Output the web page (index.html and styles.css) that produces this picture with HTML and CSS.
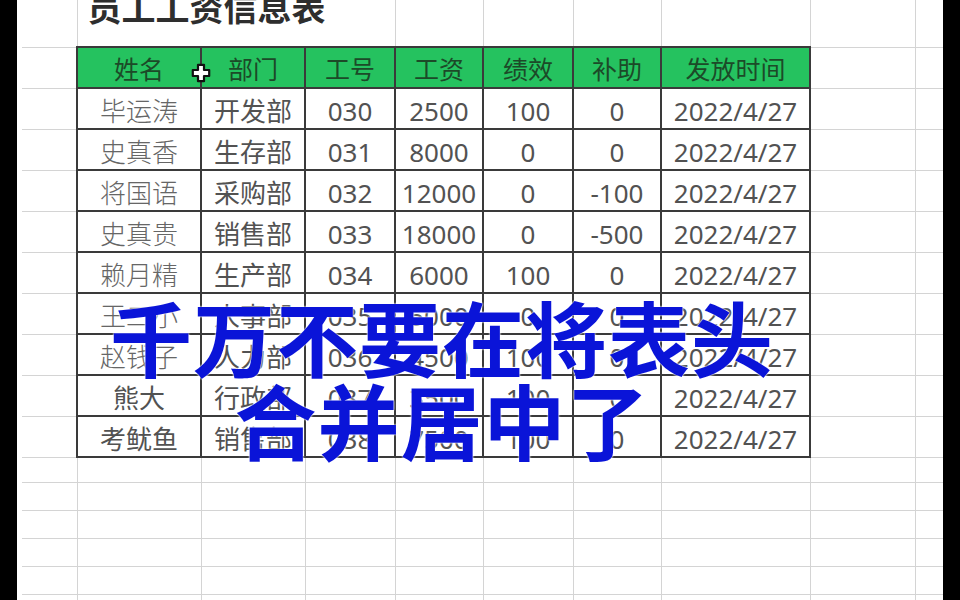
FILE: index.html
```html
<!DOCTYPE html>
<html lang="zh">
<head>
<meta charset="utf-8">
<title>员工工资信息表</title>
<link rel="stylesheet" href="styles.css">
</head>
<body>
<div class="bar"></div>
<main class="paper">
  <table class="sheet">
    <colgroup>
      <col class="c-a"><col class="c-b"><col class="c-c"><col class="c-d"><col class="c-e"><col class="c-f"><col class="c-g"><col class="c-h"><col class="c-i"><col class="c-j">
    </colgroup>
    <tr class="row-title">
      <td></td>
      <td class="title" colspan="3"><div class="title-text">员工工资信息表</div></td>
      <td></td><td></td><td></td><td></td><td></td><td></td>
    </tr>
    <tr class="row-t">
      <td></td>
      <td class="h">姓名</td><td class="h">部门</td><td class="h">工号</td><td class="h">工资</td><td class="h">绩效</td><td class="h">补助</td><td class="h">发放时间</td>
      <td></td><td></td>
    </tr>
    <tr class="row-t">
      <td></td>
      <td class="t name">毕运涛</td><td class="t">开发部</td><td class="t">030</td><td class="t">2500</td><td class="t">100</td><td class="t">0</td><td class="t">2022/4/27</td>
      <td></td><td></td>
    </tr>
    <tr class="row-t">
      <td></td>
      <td class="t name">史真香</td><td class="t">生存部</td><td class="t">031</td><td class="t">8000</td><td class="t">0</td><td class="t">0</td><td class="t">2022/4/27</td>
      <td></td><td></td>
    </tr>
    <tr class="row-t">
      <td></td>
      <td class="t name">将国语</td><td class="t">采购部</td><td class="t">032</td><td class="t">12000</td><td class="t">0</td><td class="t">-100</td><td class="t">2022/4/27</td>
      <td></td><td></td>
    </tr>
    <tr class="row-t">
      <td></td>
      <td class="t name">史真贵</td><td class="t">销售部</td><td class="t">033</td><td class="t">18000</td><td class="t">0</td><td class="t">-500</td><td class="t">2022/4/27</td>
      <td></td><td></td>
    </tr>
    <tr class="row-t">
      <td></td>
      <td class="t name">赖月精</td><td class="t">生产部</td><td class="t">034</td><td class="t">6000</td><td class="t">100</td><td class="t">0</td><td class="t">2022/4/27</td>
      <td></td><td></td>
    </tr>
    <tr class="row-t">
      <td></td>
      <td class="t name">王二小</td><td class="t">人事部</td><td class="t">035</td><td class="t">5000</td><td class="t">0</td><td class="t">0</td><td class="t">2022/4/27</td>
      <td></td><td></td>
    </tr>
    <tr class="row-t">
      <td></td>
      <td class="t name">赵钱子</td><td class="t">人力部</td><td class="t">036</td><td class="t">4500</td><td class="t">100</td><td class="t">0</td><td class="t">2022/4/27</td>
      <td></td><td></td>
    </tr>
    <tr class="row-t">
      <td></td>
      <td class="t">熊大</td><td class="t">行政部</td><td class="t">037</td><td class="t">3500</td><td class="t">100</td><td class="t">0</td><td class="t">2022/4/27</td>
      <td></td><td></td>
    </tr>
    <tr class="row-t">
      <td></td>
      <td class="t">考鱿鱼</td><td class="t">销售部</td><td class="t">038</td><td class="t">7500</td><td class="t">100</td><td class="t">0</td><td class="t">2022/4/27</td>
      <td></td><td></td>
    </tr>
    <tr class="row-gap"><td></td><td></td><td></td><td></td><td></td><td></td><td></td><td></td><td></td><td></td></tr>
    <tr class="row-s"><td></td><td></td><td></td><td></td><td></td><td></td><td></td><td></td><td></td><td></td></tr>
    <tr class="row-s"><td></td><td></td><td></td><td></td><td></td><td></td><td></td><td></td><td></td><td></td></tr>
    <tr class="row-s"><td></td><td></td><td></td><td></td><td></td><td></td><td></td><td></td><td></td><td></td></tr>
    <tr class="row-s"><td></td><td></td><td></td><td></td><td></td><td></td><td></td><td></td><td></td><td></td></tr>
    <tr class="row-s"><td></td><td></td><td></td><td></td><td></td><td></td><td></td><td></td><td></td><td></td></tr>
  </table>
</main>
<div class="bar"></div>

<svg class="cursor" viewBox="0 0 20 20" aria-hidden="true">
  <path d="M7 1.8h6v5.2h5.2v6H13v5.2H7V13H1.8V7H7z" fill="#fff" stroke="#111" stroke-width="2.2" stroke-linejoin="round"/>
</svg>

<div class="caption">
  <div>千万不要在将表头</div>
  <div>合并居中了</div>
</div>
</body>
</html>
```
FILE: styles.css
```css
html, body {
  margin: 0;
  padding: 0;
}
body {
  width: 960px;
  height: 600px;
  overflow: hidden;
  background: #000;
  display: flex;
  position: relative;
}
.bar {
  width: 17px;
  flex: none;
  background: #000;
}
.paper {
  width: 926px;
  flex: none;
  height: 600px;
  background: #fff;
  padding-left: 5px;
  box-sizing: border-box;
  overflow: hidden;
}
.sheet {
  border-collapse: collapse;
  table-layout: fixed;
  width: 921px;
  border: none;
  font-family: "Noto Sans", "Noto Sans CJK SC", sans-serif;
}
.c-a { width: 55px; }
.c-b { width: 124px; }
.c-c { width: 104px; }
.c-d { width: 90px; }
.c-e { width: 88px; }
.c-f { width: 90px; }
.c-g { width: 88px; }
.c-h { width: 149px; }
.c-i { width: 105px; }
.c-j { width: 28px; }

.sheet td {
  border: 1px solid #d4d4d4;
  padding: 0;
  text-align: center;
  vertical-align: middle;
  white-space: nowrap;
  box-sizing: border-box;
  line-height: 26px;
}
.sheet tr td:first-child { border-left: none; }
.row-title td { border-top: none; height: 47px; }
.row-t td { height: 41px; }
.row-gap td { height: 25px; }
.row-s td { height: 28px; }

.title {
  text-align: left !important;
  vertical-align: top !important;
}
.title-text {
  margin-top: -10px;
  padding-left: 10px;
  font-family: "Noto Sans CJK SC", sans-serif;
  font-weight: 700;
  font-size: 34px;
  line-height: 34px;
  color: #2e2e2e;
}

.sheet td.h {
  border: 2px solid #3a3a3a;
  background: #25c25f;
  color: #1c4a28;
  font-size: 25px;
  padding-top: 3px;
}
.sheet td.t {
  border: 2px solid #3a3a3a;
  color: #525252;
  font-size: 26px;
  padding-top: 4px;
}
.sheet td.name {
  color: #666;
  font-weight: 300;
}

.cursor {
  position: absolute;
  left: 191px;
  top: 63px;
  width: 20px;
  height: 20px;
}

.caption {
  position: absolute;
  left: 0;
  top: 294px;
  width: 884px;
  text-align: center;
  font-family: "Noto Sans CJK SC", sans-serif;
  font-weight: 700;
  font-size: 82px;
  line-height: 83px;
  letter-spacing: 1px;
  color: #0a14d8;
  text-shadow: 0 0 2px #fff, 0 0 2px #fff;
}
```
